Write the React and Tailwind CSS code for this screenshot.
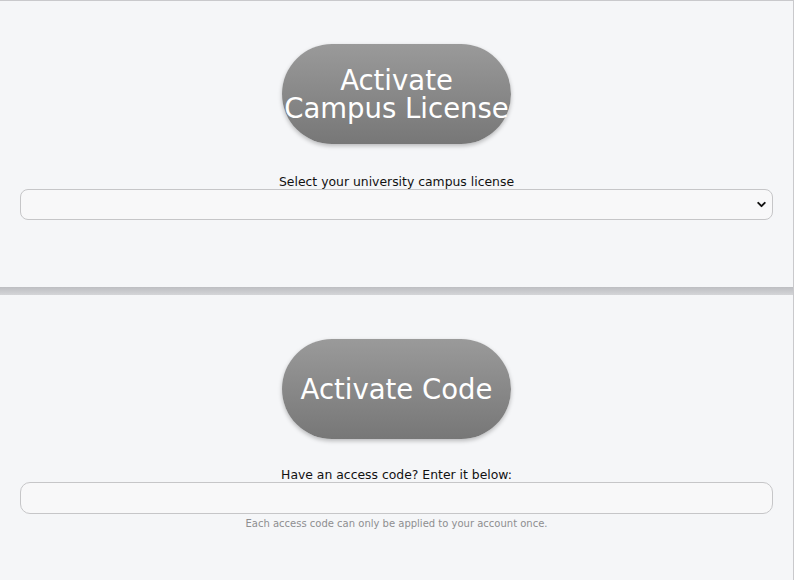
import { ChevronDown } from 'lucide-react'

function PillButton({ children }) {
  return (
    <button className="w-[229px] h-[100px] rounded-full bg-gradient-to-b from-[#9a9a9a] to-[#777777] shadow-[0_2px_4px_rgba(0,0,0,0.25)] text-white text-[27.5px] leading-[28px] flex items-center justify-center whitespace-nowrap">
      <span>{children}</span>
    </button>
  )
}

export default function App() {
  return (
    <div className="w-[794px] h-[580px] bg-[#f5f6f8] border-t border-r border-[#c9c9cc] font-['DejaVu_Sans',sans-serif] text-[#111] overflow-hidden">
      {/* Campus license */}
      <section className="h-[286px] flex flex-col items-center pt-[43px]">
        <PillButton>
          <span className="block">Activate<br />Campus License</span>
        </PillButton>
        <label className="mt-[30px] text-[12.4px] leading-[15px]">Select your university campus license</label>
        <div className="relative w-[753px]">
          <select className="appearance-none w-full h-[31px] rounded-[8px] border border-[#c6c6c8] bg-[#f8f8f9] px-2 text-[12px]">
            <option></option>
          </select>
          <ChevronDown className="absolute right-[5px] top-[9px] text-[#111]" size={13} strokeWidth={3.5} />
        </div>
      </section>

      <div className="h-[8px] bg-gradient-to-b from-[#bdbec2] to-[#d4d5d8]" />

      {/* Access code */}
      <section className="flex flex-col items-center pt-[44px]">
        <PillButton>Activate Code</PillButton>
        <label className="mt-[28px] text-[12.4px] leading-[15px]">Have an access code? Enter it below:</label>
        <input className="w-[753px] h-[32px] rounded-[10px] border border-[#c6c6c8] bg-[#f8f8f9] px-3 text-[12px] outline-none" />
        <p className="mt-[3px] text-[10px] leading-[14px] text-[#8e8e90]">Each access code can only be applied to your account once.</p>
      </section>
    </div>
  )
}
